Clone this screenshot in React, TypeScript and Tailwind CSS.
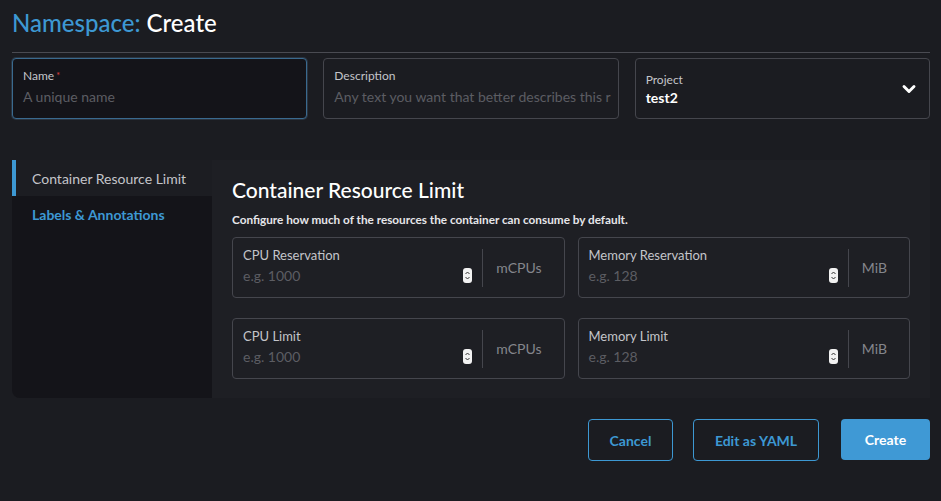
import { ChevronDown } from "lucide-react";

const FONT = { fontFamily: "Lato, 'Open Sans', sans-serif" };

function Spinner() {
  return (
    <svg width="9" height="15" viewBox="0 0 9 15" className="shrink-0">
      <rect x="0" y="0" width="9" height="15" rx="3" fill="#f2f2f2" />
      <path d="M2.5 6 L4.5 4 L6.5 6" stroke="#333" strokeWidth="1" fill="none" />
      <path d="M2.5 9 L4.5 11 L6.5 9" stroke="#333" strokeWidth="1" fill="none" />
    </svg>
  );
}

type UnitInputProps = {
  label: string;
  placeholder: string;
  unit: string;
};

function UnitInput({ label, placeholder, unit }: UnitInputProps) {
  return (
    <div className="flex h-[61px] items-center rounded border border-[#45464d] pl-[10px]">
      <div className="flex flex-1 flex-col self-start pt-[9px]">
        <span className="text-[13px] leading-4 text-[#c4c5ca]">{label}</span>
        <span className="mt-[5px] text-[14px] leading-4 text-[#5c5d63]">{placeholder}</span>
      </div>
      <div className="mr-[10px] mt-[15px]">
        <Spinner />
      </div>
      <div className="h-[38px] w-px bg-[#45464d]" />
      <span className="pl-[13px] pr-[22px] text-[14px] text-[#85868c]">{unit}</span>
    </div>
  );
}

export default function App() {
  return (
    <div className="min-h-[501px] bg-[#1b1c21] pl-3 pr-[11px] pt-[9px]" style={FONT}>
      <h1 className="text-[24px] leading-7 font-medium">
        <span className="text-[#3d98d3]">Namespace: </span>
        <span className="text-white">Create</span>
      </h1>

      <div className="mt-[15px] h-px bg-[#4a4b52]" />

      <div className="mt-[5px] grid grid-cols-3 gap-4">
        <div className="flex h-[61px] flex-col rounded border border-[#3a6a8f] bg-[#141419] px-[10px] pt-[9px] shadow-[0_0_0_1px_#2a3440]">
          <span className="text-[12px] leading-4 text-[#c4c5ca]">
            Name<span className="ml-[2px] align-top text-[9px] text-[#e0413f]">*</span>
          </span>
          <span className="mt-[5px] text-[14px] leading-4 text-[#5c5d63]">A unique name</span>
        </div>
        <div className="flex h-[61px] flex-col overflow-hidden rounded border border-[#45464d] px-[10px] pt-[9px]">
          <span className="text-[12px] leading-4 text-[#c4c5ca]">Description</span>
          <span className="mt-[5px] whitespace-nowrap text-[14px] leading-4 text-[#5c5d63]">
            Any text you want that better describes this r
          </span>
        </div>
        <div className="flex h-[61px] items-center rounded border border-[#45464d] px-[10px]">
          <div className="flex flex-1 flex-col">
            <span className="text-[12px] leading-4 text-[#c4c5ca]">Project</span>
            <span className="mt-[2px] text-[14px] leading-4 font-bold text-white">test2</span>
          </div>
          <ChevronDown className="h-5 w-5 text-white" strokeWidth={3.5} />
        </div>
      </div>

      <div className="mt-[41px] flex h-[238px]">
        <div className="flex w-[200px] flex-col rounded-bl-lg bg-[#141419]">
          <div className="flex h-9 items-center border-l-4 border-[#3d98d3] bg-[#1c1d22] pl-4 text-[14px] text-[#c4c5ca]">
            Container Resource Limit
          </div>
          <div className="pl-5 pt-2 text-[14px] font-bold text-[#3d98d3]">Labels &amp; Annotations</div>
        </div>
        <div className="flex-1 bg-[#1e1f24] pl-5 pr-5 pt-[18px]">
          <h2 className="text-[21px] leading-6 font-medium text-white">Container Resource Limit</h2>
          <p className="mt-[10px] text-[11.75px] leading-4 font-bold text-[#e6e6ea]">
            Configure how much of the resources the container can consume by default.
          </p>
          <div className="mt-[9px] grid grid-cols-2 gap-x-[13px] gap-y-[20px]">
            <UnitInput label="CPU Reservation" placeholder="e.g. 1000" unit="mCPUs" />
            <UnitInput label="Memory Reservation" placeholder="e.g. 128" unit="MiB" />
            <UnitInput label="CPU Limit" placeholder="e.g. 1000" unit="mCPUs" />
            <UnitInput label="Memory Limit" placeholder="e.g. 128" unit="MiB" />
          </div>
        </div>
      </div>

      <div className="mt-[21px] flex justify-end">
        <button className="h-[42px] w-[85px] rounded border border-[#3d98d3] text-[14px] font-bold text-[#3d98d3]">
          Cancel
        </button>
        <button className="ml-[20px] h-[42px] w-[126px] rounded border border-[#3d98d3] text-[14px] font-bold text-[#3d98d3]">
          Edit as YAML
        </button>
        <button className="ml-[22px] h-[41px] w-[89px] rounded bg-[#3f99d5] text-[14px] font-bold text-white">
          Create
        </button>
      </div>
    </div>
  );
}
